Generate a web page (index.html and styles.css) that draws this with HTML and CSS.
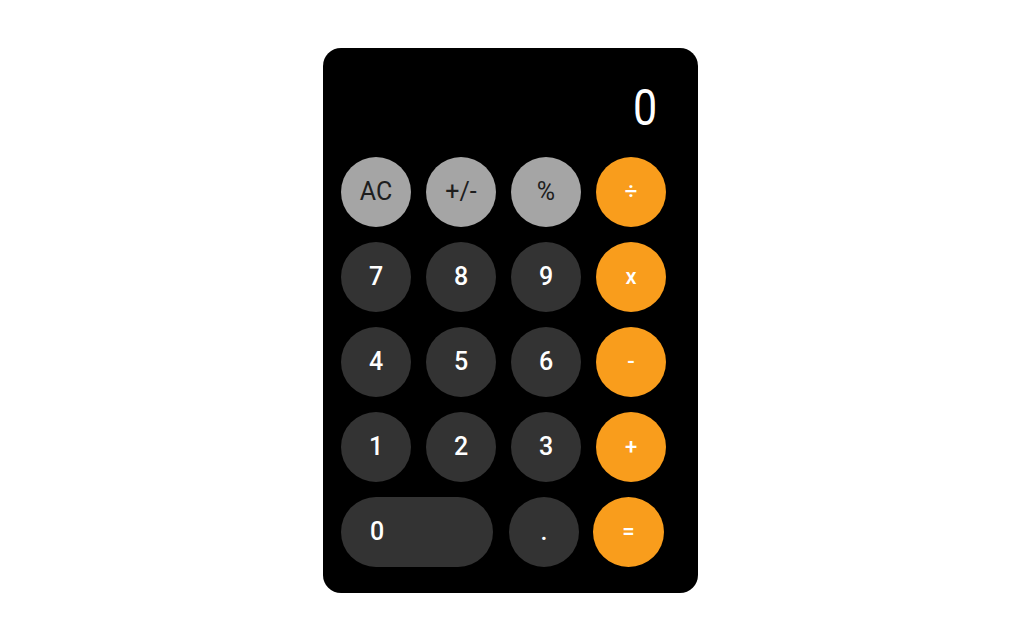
FILE: index.html
```html
<!DOCTYPE html>
<html lang="en">
<head>
    <meta charset="UTF-8">
    <meta name="viewport" content="width=device-width, initial-scale=1.0">
    <title>Calculator</title>
    <link rel="stylesheet" href="styles.css">
</head>
<body>
    <div class="calculator">
        <div class="display"><span id="result">0</span></div>
        <div class="keys">
            <div class="row">
                <button class="btn light">AC</button>
                <button class="btn light">+/-</button>
                <button class="btn light">%</button>
                <button class="btn orange">÷</button>
            </div>
            <div class="row">
                <button class="btn dark">7</button>
                <button class="btn dark">8</button>
                <button class="btn dark">9</button>
                <button class="btn orange">x</button>
            </div>
            <div class="row">
                <button class="btn dark">4</button>
                <button class="btn dark">5</button>
                <button class="btn dark">6</button>
                <button class="btn orange">-</button>
            </div>
            <div class="row">
                <button class="btn dark">1</button>
                <button class="btn dark">2</button>
                <button class="btn dark">3</button>
                <button class="btn orange">+</button>
            </div>
            <div class="row last">
                <button class="btn dark zero">0</button>
                <button class="btn dark dot">.</button>
                <button class="btn orange equal">=</button>
            </div>
        </div>
    </div>
</body>
</html>
```

FILE: styles.css
```css
body {
    margin: 0;
    height: 100vh;
    background-color: #fff;
    font-family: Roboto, "Liberation Sans", sans-serif;
    display: flex;
    justify-content: center;
    align-items: center;
}
.calculator {
    width: 375px;
    height: 545px;
    box-sizing: border-box;
    background-color: #000;
    border-radius: 18px;
    padding: 0 0 0 18px;
    margin: 2px 0 0 1px;
}
.display {
    height: 109px;
    box-sizing: border-box;
    padding: 35px 41px 0 0;
    color: #fff;
    font-size: 50px;
    line-height: 1;
    text-align: right;
}
.display span {
    display: inline-block;
    transform: scaleX(0.86);
    transform-origin: right;
}
.keys {
    display: flex;
    flex-direction: column;
    gap: 15px;
}
.row {
    display: flex;
    gap: 15px;
}
.btn {
    width: 70px;
    height: 70px;
    border: none;
    border-radius: 50%;
    padding: 0;
    font-family: inherit;
    font-size: 25px;
    font-weight: 500;
    cursor: pointer;
}
.light {
    background-color: #a5a5a5;
    color: #1e1e1e;
    font-weight: 400;
}
.dark {
    background-color: #333;
    color: #fff;
}
.orange {
    background-color: #f99d1c;
    color: #fff;
    font-size: 22px;
}
.zero {
    width: 152px;
    border-radius: 35px;
    text-align: left;
    padding-left: 29px;
}
.row.last .dot {
    margin-left: 1px;
}
.row.last .equal {
    margin-left: -1px;
    width: 71px;
}
```
